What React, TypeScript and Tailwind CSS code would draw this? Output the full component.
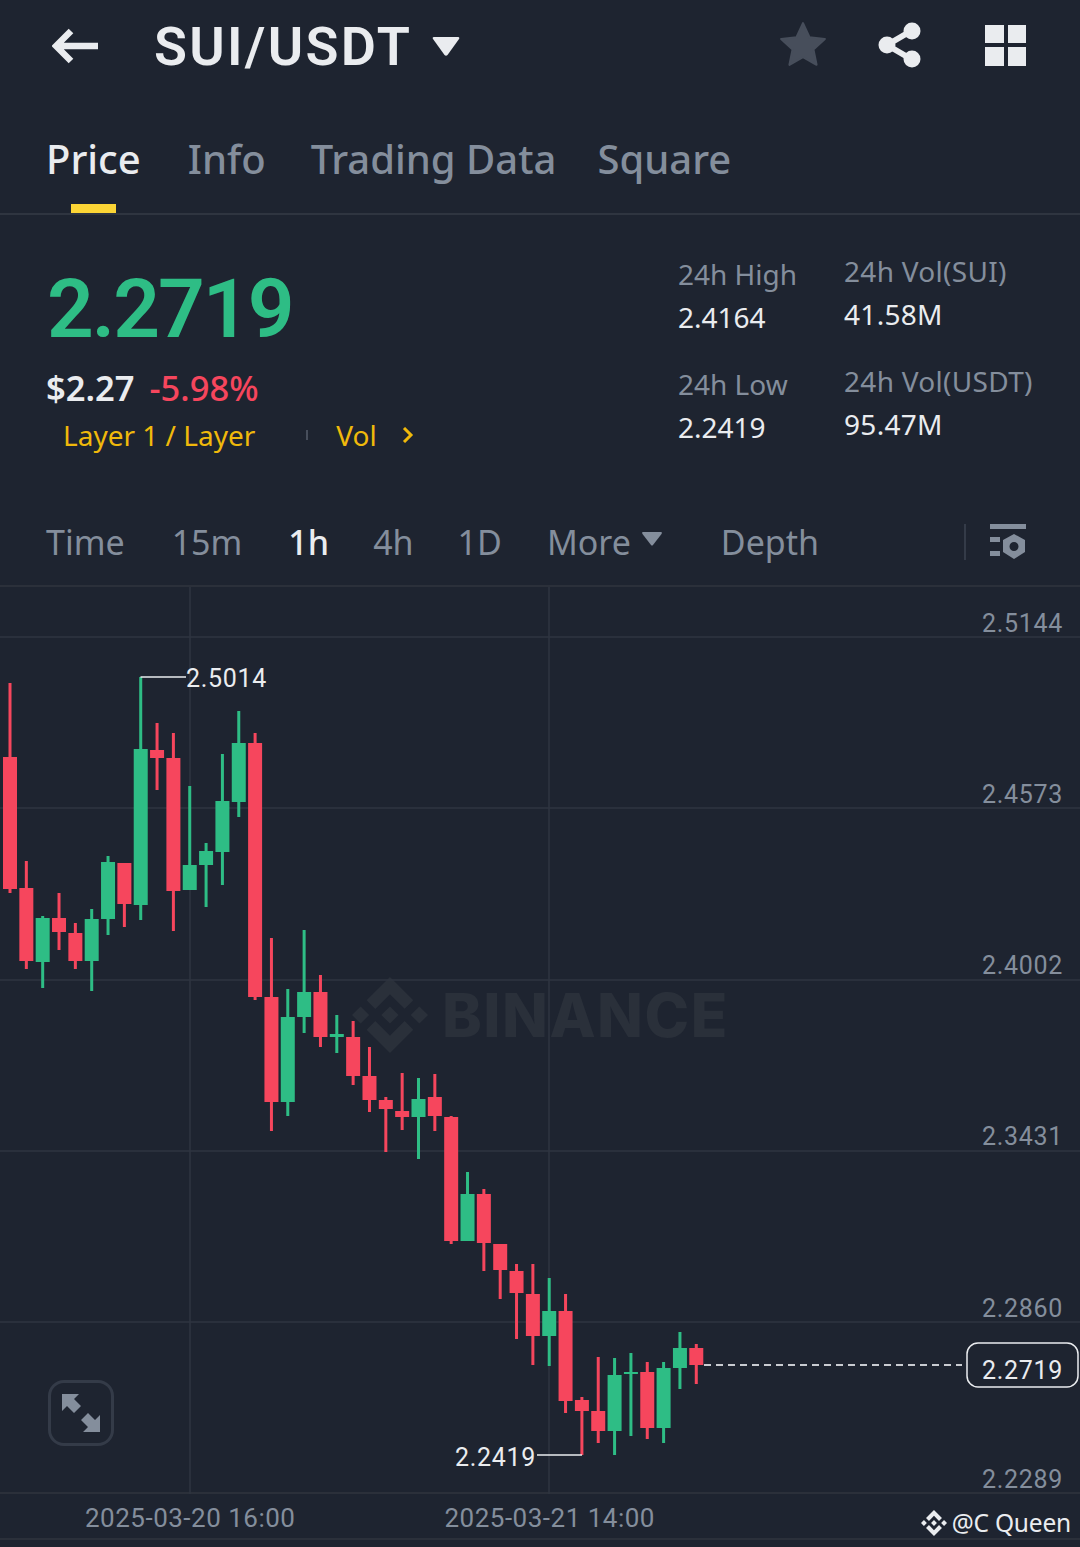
import { SiBinance } from "react-icons/si";

// [wickTop, bodyTop, bodyBottom, wickBottom, isUp], y values in page pixels
const candles: [number, number, number, number, boolean][] = [
  [683, 757, 889, 893, false],
  [861, 888, 961, 969, false],
  [916, 918, 962, 988, true],
  [893, 918, 932, 950, false],
  [923, 933, 961, 969, false],
  [909, 919, 961, 991, true],
  [856, 862, 919, 935, true],
  [863, 863, 904, 927, false],
  [677, 749, 905, 920, true],
  [723, 750, 758, 790, false],
  [733, 758, 891, 931, false],
  [786, 865, 890, 890, true],
  [843, 851, 865, 907, true],
  [754, 801, 852, 885, true],
  [711, 743, 802, 817, true],
  [733, 743, 997, 1000, false],
  [938, 997, 1102, 1131, false],
  [989, 1017, 1102, 1116, true],
  [930, 992, 1017, 1033, true],
  [975, 992, 1037, 1047, false],
  [1015, 1034, 1037, 1053, true],
  [1021, 1037, 1076, 1085, false],
  [1047, 1076, 1100, 1112, false],
  [1097, 1100, 1109, 1152, false],
  [1073, 1111, 1117, 1130, false],
  [1078, 1099, 1117, 1159, true],
  [1074, 1097, 1116, 1131, false],
  [1116, 1117, 1241, 1244, false],
  [1172, 1194, 1241, 1241, true],
  [1189, 1194, 1243, 1271, false],
  [1244, 1244, 1270, 1299, false],
  [1264, 1271, 1293, 1339, false],
  [1264, 1294, 1336, 1365, false],
  [1278, 1311, 1336, 1366, true],
  [1294, 1311, 1401, 1413, false],
  [1397, 1400, 1411, 1455, false],
  [1357, 1411, 1431, 1443, false],
  [1358, 1375, 1431, 1455, true],
  [1353, 1372, 1374, 1436, true],
  [1362, 1372, 1428, 1439, false],
  [1362, 1368, 1428, 1443, true],
  [1332, 1348, 1368, 1389, true],
  [1344, 1348, 1365, 1384, false],
];

const priceLabels = [
  { y: 632, text: "2.5144" },
  { y: 803, text: "2.4573" },
  { y: 974, text: "2.4002" },
  { y: 1145, text: "2.3431" },
  { y: 1317, text: "2.2860" },
  { y: 1488, text: "2.2289" },
];

function Chart() {
  return (
    <div className="relative h-[907px] border-b-2 border-[#2b303a]">
      {/* Watermark */}
      <div className="absolute left-[352px] top-[390px] flex items-center gap-[14px] text-[#2a303a]">
        <SiBinance className="w-[76px] h-[76px]" />
        <span className="font-['Inter',sans-serif] font-extrabold text-[60px] leading-none tracking-[1.5px]">
          BINANCE
        </span>
      </div>

      <svg
        viewBox="0 587 1080 907"
        className="absolute inset-0 w-[1080px] h-[907px] font-['Roboto',sans-serif] text-[25px] tracking-[0.7px]"
      >
        {[637, 808, 980, 1151, 1322].map((y) => (
          <line key={y} x1="0" x2="1080" y1={y} y2={y} stroke="#2f3540" strokeWidth="1.5" />
        ))}
        {[190, 549].map((x) => (
          <line key={x} x1={x} x2={x} y1="587" y2="1494" stroke="#2f3540" strokeWidth="1.5" />
        ))}

        {candles.map(([wickTop, bodyTop, bodyBottom, wickBottom, isUp], i) => {
          const x = 10 + i * 16.34;
          const color = isUp ? "#2ebd85" : "#f6465d";
          return (
            <g key={i} fill={color}>
              <rect x={x - 1.5} y={wickTop} width="3" height={wickBottom - wickTop} />
              <rect x={x - 7} y={bodyTop} width="14" height={bodyBottom - bodyTop} />
            </g>
          );
        })}

        {/* High / low markers */}
        <path d="M140.5 677H186" stroke="#eaecef" strokeWidth="1.5" fill="none" />
        <text x="186" y="687" fill="#eaecef">2.5014</text>
        <path d="M582 1455H537" stroke="#eaecef" strokeWidth="1.5" fill="none" />
        <text x="455" y="1466" fill="#eaecef">2.2419</text>

        {/* Last price */}
        <line x1="704" x2="962" y1="1365" y2="1365" stroke="#c9ccd1" strokeWidth="2" strokeDasharray="7 5" />
        <rect x="967" y="1343" width="111" height="44" rx="11" fill="#1e2430" stroke="#eaecef" strokeWidth="1.5" />
        <text x="982" y="1379" fill="#eaecef">2.2719</text>

        {priceLabels.map((p) => (
          <text key={p.text} x="982" y={p.y} fill="#848e9c">
            {p.text}
          </text>
        ))}
      </svg>

      {/* Expand button */}
      <div className="absolute left-[48px] top-[793px] w-[66px] h-[66px] rounded-[16px] border-[3px] border-[#343b48] flex items-center justify-center">
        <svg viewBox="0 0 40 40" className="w-[40px] h-[40px]" fill="#848e9c">
          <path d="M1 1H18L13 6L20 13L13 20L6 13L1 18Z" />
          <path d="M39 39H22L27 34L20 27L27 20L34 27L39 22Z" />
        </svg>
      </div>
    </div>
  );
}

export default function App() {
  return (
    <div className="w-[1080px] h-[1547px] overflow-hidden bg-[#1e2430] font-['Noto_Sans',sans-serif] text-[#eaecef]">
      {/* Header */}
      <div className="h-[92px] flex items-center pl-[52px] pr-[54px]">
        <svg viewBox="0 0 46 36" className="w-[46px] h-[36px]" fill="none" stroke="#eaecef" strokeWidth="6.500">
          <path d="M46 18H4M19 3L4 18L19 33" />
        </svg>
        <span className="ml-[56px] mt-[2px] font-['Roboto',sans-serif] font-semibold text-[54px] leading-none tracking-[2.3px]">
          SUI/USDT
        </span>
        <svg viewBox="0 0 28 19" className="ml-[20px] w-[28px] h-[19px]" fill="#eaecef">
          <path d="M2 0H26Q28 0 27 2L15.500 18Q14 19.500 12.500 18L1 2Q0 0 2 0Z" />
        </svg>
        <svg viewBox="0 0 24 24" className="ml-auto -mt-[2px] w-[50px] h-[50px]" fill="#474e5b">
          <path d="M12 1.500L15.100 8.300L22.500 9.100L17 14.100L18.500 21.500L12 17.800L5.500 21.500L7 14.100L1.500 9.100L8.900 8.300Z" stroke="#474e5b" strokeWidth="1" strokeLinejoin="round" />
        </svg>
        <svg viewBox="0 0 44 46" className="ml-[50px] -mt-[2px] w-[44px] h-[46px]" fill="#eaecef" stroke="#eaecef">
          <path d="M9 23L33 9M9 23L33 37" strokeWidth="6" />
          <circle cx="9" cy="23" r="8.500" stroke="none" />
          <circle cx="34" cy="9" r="8.500" stroke="none" />
          <circle cx="34" cy="37" r="8.500" stroke="none" />
        </svg>
        <div className="ml-[63px] -mt-[2px] grid grid-cols-2 gap-[4px] w-[41px] h-[41px]">
          <div className="bg-[#eaecef]" />
          <div className="bg-[#eaecef]" />
          <div className="bg-[#eaecef]" />
          <div className="bg-[#eaecef]" />
        </div>
      </div>

      {/* Tabs */}
      <div className="h-[123px] border-b-2 border-[#2f3540] flex pl-[46px] gap-[46px] text-[40px] font-medium text-[#848e9c]">
        <div className="relative h-full flex items-center pt-[13px] text-[#eaecef]">
          Price
          <div className="absolute left-[25px] bottom-0 w-[45px] h-[9px] bg-[#fcd535]" />
        </div>
        <div className="flex items-center pt-[13px] ml-[1px]">Info</div>
        <div className="flex items-center pt-[13px] -ml-[1px]">Trading Data</div>
        <div className="flex items-center pt-[13px] -ml-[5px]">Square</div>
      </div>

      {/* Market stats */}
      <div className="h-[286px] flex pl-[46px]">
        <div className="w-[632px] pt-[46px]">
          <div className="font-['Roboto',sans-serif] font-semibold text-[82px] leading-[96px] tracking-[-2px] text-[#2ebd85] pl-[1px]">
            2.2719
          </div>
          <div className="mt-[9px] flex items-center h-[44px] text-[34.500px] font-semibold">
            $2.27
            <span className="ml-[15px] font-medium text-[#f6465d]">-5.98%</span>
          </div>
          <div className="flex items-center h-[50px] pl-[17px] text-[28px] text-[#f0b90b]">
            <span>Layer 1 / Layer</span>
            <span className="ml-[51px] w-[2px] h-[10px] bg-[#474e5b]" />
            <span className="ml-[28px]">Vol</span>
            <svg viewBox="0 0 12 16" className="ml-[25px] w-[12px] h-[16px]" fill="none" stroke="#f0b90b" strokeWidth="3">
              <path d="M2 1L9 8L2 15" />
            </svg>
          </div>
        </div>
        <div className="w-[166px] pt-[37px] text-[28px]">
          <div className="leading-[44px] text-[#848e9c]">24h High</div>
          <div className="leading-[42px]">2.4164</div>
          <div className="mt-[24px] leading-[44px] text-[#848e9c]">24h Low</div>
          <div className="leading-[42px]">2.2419</div>
        </div>
        <div className="pt-[34px] text-[28px] tracking-[0.3px]">
          <div className="leading-[44px] text-[#848e9c]">24h Vol(SUI)</div>
          <div className="leading-[42px]">41.58M</div>
          <div className="mt-[24px] leading-[44px] text-[#848e9c]">24h Vol(USDT)</div>
          <div className="leading-[42px]">95.47M</div>
        </div>
      </div>

      {/* Interval selector */}
      <div className="h-[86px] border-b-2 border-[#2b303a] flex items-center pl-[46px] pb-[2px] text-[34px] text-[#848e9c]">
        <span>Time</span>
        <span className="ml-[47px]">15m</span>
        <span className="ml-[46px] font-medium text-[#eaecef]">1h</span>
        <span className="ml-[44px]">4h</span>
        <span className="ml-[44px]">1D</span>
        <span className="ml-[45px]">More</span>
        <svg viewBox="0 0 20 14" className="ml-[11px] mb-[6px] w-[20px] h-[14px]" fill="#848e9c">
          <path d="M1 0H19Q20.500 0 19.500 2L11 13Q10 14 9 13L0.500 2Q-0.500 0 1 0Z" />
        </svg>
        <span className="ml-[59px]">Depth</span>
        <div className="ml-auto mr-[24px] w-[2px] h-[36px] bg-[#343b48]" />
        <svg viewBox="0 0 36 36" className="mr-[54px] w-[36px] h-[36px]" fill="#848e9c">
          <rect x="0" y="0" width="36" height="5" />
          <rect x="0" y="13" width="10" height="5" />
          <rect x="0" y="27" width="10" height="5" />
          <path fillRule="evenodd" d="M24 10L35 16V28L24 35L13 28V16ZM24 18A4.500 4.500 0 1 0 24.010 27A4.500 4.500 0 1 0 24 18Z" />
        </svg>
      </div>

      <Chart />

      {/* Time axis */}
      <div className="relative h-[46px] border-b-2 border-[#2b303a] flex items-center pl-[85px] pt-[4px] gap-[149px] font-['Roboto',sans-serif] text-[26px] tracking-[0.5px] text-[#848e9c]">
        <span>2025-03-20 16:00</span>
        <span>2025-03-21 14:00</span>
        <div className="absolute right-[9px] top-[11px] flex items-center gap-[5px] font-['Noto_Sans',sans-serif] text-[24.500px] tracking-[-0.2px] text-[#eaecef]">
          <SiBinance className="w-[26px] h-[26px]" />
          <span>@C Queen</span>
        </div>
      </div>
    </div>
  );
}
